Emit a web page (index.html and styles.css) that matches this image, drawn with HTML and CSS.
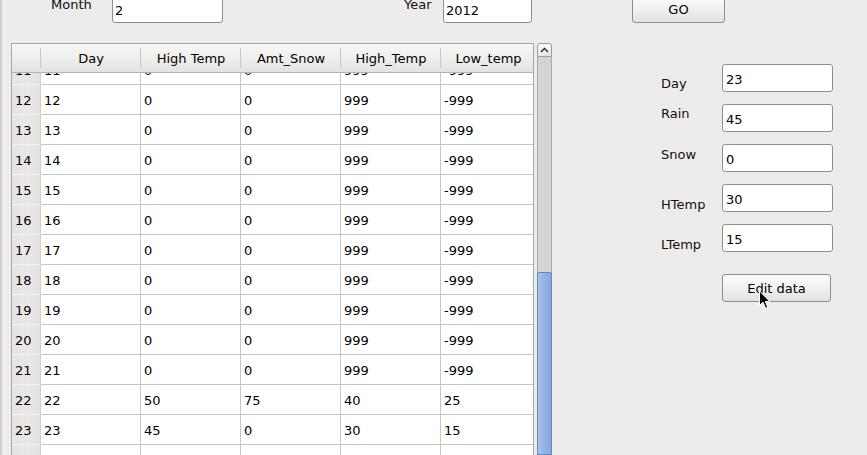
FILE: index.html
```html
<!DOCTYPE html>
<html>
<head>
<meta charset="utf-8">
<title>Weather data</title>
<link rel="stylesheet" href="styles.css">
</head>
<body>
<div class="window">
  <div class="topbar">
    <label class="lbl lbl-month">Month</label>
    <input class="field field-month" value="2">
    <label class="lbl lbl-year">Year</label>
    <input class="field field-year" value="2012">
    <button class="btn btn-go">GO</button>
  </div>
  <div class="main">
    <div class="table">
      <div class="row thead">
        <div class="hcell corner"></div>
        <div class="hcell">Day</div>
        <div class="hcell">High Temp</div>
        <div class="hcell">Amt_Snow</div>
        <div class="hcell">High_Temp</div>
        <div class="hcell last">Low_temp</div>
      </div>
      <div class="tbody">
        <div class="rows">
          <div class="row"><div class="rh">11</div><div class="cell">11</div><div class="cell">0</div><div class="cell">0</div><div class="cell">999</div><div class="cell last">-999</div></div>
          <div class="row"><div class="rh">12</div><div class="cell">12</div><div class="cell">0</div><div class="cell">0</div><div class="cell">999</div><div class="cell last">-999</div></div>
          <div class="row"><div class="rh">13</div><div class="cell">13</div><div class="cell">0</div><div class="cell">0</div><div class="cell">999</div><div class="cell last">-999</div></div>
          <div class="row"><div class="rh">14</div><div class="cell">14</div><div class="cell">0</div><div class="cell">0</div><div class="cell">999</div><div class="cell last">-999</div></div>
          <div class="row"><div class="rh">15</div><div class="cell">15</div><div class="cell">0</div><div class="cell">0</div><div class="cell">999</div><div class="cell last">-999</div></div>
          <div class="row"><div class="rh">16</div><div class="cell">16</div><div class="cell">0</div><div class="cell">0</div><div class="cell">999</div><div class="cell last">-999</div></div>
          <div class="row"><div class="rh">17</div><div class="cell">17</div><div class="cell">0</div><div class="cell">0</div><div class="cell">999</div><div class="cell last">-999</div></div>
          <div class="row"><div class="rh">18</div><div class="cell">18</div><div class="cell">0</div><div class="cell">0</div><div class="cell">999</div><div class="cell last">-999</div></div>
          <div class="row"><div class="rh">19</div><div class="cell">19</div><div class="cell">0</div><div class="cell">0</div><div class="cell">999</div><div class="cell last">-999</div></div>
          <div class="row"><div class="rh">20</div><div class="cell">20</div><div class="cell">0</div><div class="cell">0</div><div class="cell">999</div><div class="cell last">-999</div></div>
          <div class="row"><div class="rh">21</div><div class="cell">21</div><div class="cell">0</div><div class="cell">0</div><div class="cell">999</div><div class="cell last">-999</div></div>
          <div class="row"><div class="rh">22</div><div class="cell">22</div><div class="cell">50</div><div class="cell">75</div><div class="cell">40</div><div class="cell last">25</div></div>
          <div class="row"><div class="rh">23</div><div class="cell">23</div><div class="cell">45</div><div class="cell">0</div><div class="cell">30</div><div class="cell last">15</div></div>
          <div class="row"><div class="rh"></div><div class="cell"></div><div class="cell"></div><div class="cell"></div><div class="cell"></div><div class="cell last"></div></div>
        </div>
      </div>
    </div>
    <div class="scrollbar">
      <div class="sb-up">
        <svg width="9" height="6" viewBox="0 0 9 6"><path d="M1 5 L4.5 1.5 L8 5" fill="none" stroke="#222" stroke-width="1.3"/></svg>
      </div>
      <div class="sb-track">
        <div class="sb-thumb"></div>
      </div>
    </div>
    <div class="form">
      <label class="flbl pt-day">Day</label>
      <input class="field fin" value="23">
      <label class="flbl pt-rain">Rain</label>
      <input class="field fin" value="45">
      <label class="flbl pt-snow">Snow</label>
      <input class="field fin" value="0">
      <label class="flbl pt-htemp">HTemp</label>
      <input class="field fin" value="30">
      <label class="flbl pt-ltemp">LTemp</label>
      <input class="field fin" value="15">
      <button class="btn btn-edit">Edit data</button>
    </div>
  </div>
  <svg class="cursor" width="13" height="20" viewBox="0 0 13 20">
    <path d="M1.5 1 L1.5 15.5 L5 12.2 L7.6 18.3 L9.8 17.3 L7.3 11.4 L11.8 11.4 Z" fill="#000" stroke="#fff" stroke-width="1" stroke-linejoin="miter"/>
  </svg>
</div>
</body>
</html>
```

FILE: styles.css
```css
html, body {
  margin: 0;
  padding: 0;
  background: #edeceb;
}

.window {
  position: relative;
  width: 867px;
  height: 455px;
  overflow: hidden;
  box-sizing: border-box;
  border-left: 2px solid #cfcecd;
  background: #edeceb;
  font-family: "DejaVu Sans", "Liberation Sans", sans-serif;
  font-size: 13px;
  color: #111;
}

/* ---------- top bar ---------- */
.topbar {
  display: flex;
  align-items: flex-start;
  height: 28px;
  margin-top: -5px;
  padding-left: 49px;
}

.lbl {
  line-height: 16px;
  padding-top: 2px;
}

.lbl-month {
  width: 61px;
}

.lbl-year {
  margin-left: 181px;
  width: 39px;
}

.field {
  box-sizing: border-box;
  height: 28px;
  border: 1px solid #8e8d8c;
  border-radius: 3px;
  background: #fff;
  font-family: "DejaVu Sans", "Liberation Sans", sans-serif;
  font-size: 13px;
  color: #000;
  padding: 3px 3px 0 2px;
  margin: 0;
  outline: none;
}

.field-month {
  width: 111px;
}

.field-year {
  width: 89px;
}

.btn {
  box-sizing: border-box;
  height: 28px;
  border: 1px solid #8f8e8d;
  border-radius: 3px;
  background: linear-gradient(#fdfdfd, #f0f0f0 50%, #e2e2e2);
  font-family: "DejaVu Sans", "Liberation Sans", sans-serif;
  font-size: 13px;
  color: #000;
  padding: 0;
  margin: 0;
}

.btn-go {
  width: 93px;
  margin-left: 100px;
  padding-top: 1px;
}

/* ---------- main ---------- */
.main {
  display: flex;
  align-items: stretch;
  height: 412px;
  margin-top: 20px;
}

.table {
  display: flex;
  flex-direction: column;
  box-sizing: border-box;
  width: 523px;
  margin-left: 9px;
  border: 1px solid #a8a7a6;
  border-bottom: none;
  background: #fff;
}

.row {
  display: grid;
  grid-template-columns: 29px 100px 100px 100px 100px 92px;
}

.thead {
  height: 29px;
  box-sizing: border-box;
  border-bottom: 1px solid #b4b3b2;
}

.hcell {
  height: 28px;
  line-height: 28px;
  padding-top: 1px;
  box-sizing: border-box;
  text-align: center;
  color: #000;
  white-space: nowrap;
  background:
    linear-gradient(#c9c8c7, #c9c8c7) right 4px / 1px 20px no-repeat,
    linear-gradient(#f7f7f7, #efefee 50%, #e3e2e1);
}

.hcell.last {
  padding-left: 3px;
  background: linear-gradient(#f7f7f7, #efefee 50%, #e3e2e1);
}

.tbody {
  flex: 1;
  overflow: hidden;
}

.rows {
  margin-top: -18px;
}

.rh,
.cell {
  height: 30px;
  box-sizing: border-box;
  padding: 3px 0 0 3px;
  line-height: 26px;
  color: #000;
  white-space: nowrap;
  overflow: hidden;
}

.rh {
  border-right: 1px solid #d0cfce;
  border-bottom: 1px solid #f4f4f4;
  background: linear-gradient(90deg, #e5e4e3, #e9e8e7 60%, #e3e2e1);
}

.cell {
  border-right: 1px solid #c5c5c5;
  border-bottom: 1px solid #c5c5c5;
  background: #fff;
}

.cell.last {
  border-right: none;
}

/* ---------- scrollbar ---------- */
.scrollbar {
  display: flex;
  flex-direction: column;
  width: 15px;
  margin-left: 3px;
}

.sb-up {
  box-sizing: border-box;
  height: 14px;
  border: 1px solid #9d9c9b;
  border-radius: 3px 3px 0 0;
  background: linear-gradient(#fbfbfb, #e6e6e6);
  display: flex;
  justify-content: center;
  padding-top: 3px;
}

.sb-up svg {
  display: block;
}

.sb-track {
  flex: 1;
  display: flex;
  flex-direction: column;
  box-sizing: border-box;
  border-left: 1px solid #a9a8a7;
  border-right: 1px solid #a9a8a7;
  background: #d5d4d3;
}

.sb-thumb {
  flex: 1;
  margin: 215px -1px 0 -1px;
  border: 1px solid #5f88c5;
  border-radius: 2px 2px 0 0;
  background: linear-gradient(90deg, #a9c4ec, #93b4e4 40%, #87a9de);
}

/* ---------- form ---------- */
.form {
  display: grid;
  grid-template-columns: 61px 111px;
  grid-auto-rows: 28px;
  row-gap: 12px;
  align-content: start;
  margin-left: 109px;
  padding-top: 21px;
}

.flbl {
  line-height: 16px;
  color: #111;
  white-space: nowrap;
}

.pt-day { padding-top: 12px; }
.pt-rain { padding-top: 2px; }
.pt-snow { padding-top: 3px; }
.pt-htemp { padding-top: 13px; }
.pt-ltemp { padding-top: 13px; }

.fin {
  width: 111px;
  padding-left: 3px;
}

.btn-edit {
  grid-column: 2;
  width: 109px;
  margin-top: 10px;
  padding-top: 1px;
}

.cursor {
  position: absolute;
  left: 756px;
  top: 290px;
}
```
